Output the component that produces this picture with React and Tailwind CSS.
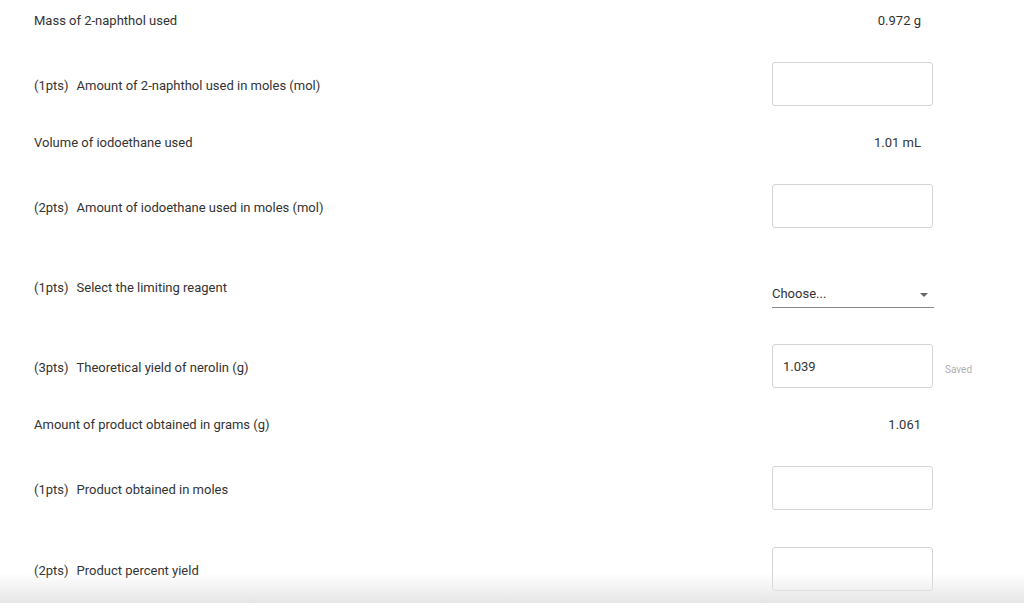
import React from "react";

function Label({ pts, children, className = "" }) {
  return (
    <div className={"flex-1 text-[13px] text-[#333] " + className}>
      {pts && <span className="mr-2">{pts}</span>}
      <span>{children}</span>
    </div>
  );
}

function ValueRow({ label, value, className }) {
  return (
    <div className={"flex items-center h-10 " + className}>
      <Label className="pt-[2px]">{label}</Label>
      <div className="w-[161px] pr-3 pt-[2px] text-right text-[13px] text-[#333]">{value}</div>
      <div className="w-[91px]" />
    </div>
  );
}

function InputRow({ pts, label, value, saved, className }) {
  return (
    <div className={"flex items-center h-11 " + className}>
      <Label pts={pts} className="pt-[3px]">{label}</Label>
      <div className="w-[161px] h-11 border border-[#d4d4d4] rounded-[3px] flex items-center px-[10px] pt-[2px] text-[13px] text-[#333] bg-white">
        {value}
      </div>
      <div className="w-[91px] pl-3 text-[10px] text-[#b0b0b0] pt-[7px]">{saved ? "Saved" : ""}</div>
    </div>
  );
}

export default function App() {
  return (
    <div
      className="relative w-[1024px] h-[603px] overflow-hidden bg-white pl-[34px]"
      style={{ fontFamily: "Roboto, 'Liberation Sans', sans-serif" }}
    >
      <ValueRow label="Mass of 2-naphthol used" value="0.972 g" className="" />
      <InputRow pts="(1pts)" label="Amount of 2-naphthol used in moles (mol)" className="mt-[22px]" />
      <ValueRow label="Volume of iodoethane used" value="1.01 mL" className="mt-4" />
      <InputRow pts="(2pts)" label="Amount of iodoethane used in moles (mol)" className="mt-[22px]" />
      <div className="flex items-center h-11 mt-9">
        <Label pts="(1pts)" className="pt-[3px]">Select the limiting reagent</Label>
        <div className="w-[162px] h-11 flex flex-col justify-end">
          <div className="flex items-center justify-between border-b border-[#8a8a8a] pb-[4px] text-[13px] text-[#333]">
            <span>Choose...</span>
            <svg width="8" height="4" viewBox="0 0 8 4" className="mr-[6px] mt-1">
              <path d="M0 0 L8 0 L4 4 Z" fill="#666" />
            </svg>
          </div>
        </div>
        <div className="w-[90px]" />
      </div>
      <InputRow pts="(3pts)" label="Theoretical yield of nerolin (g)" value="1.039" saved className="mt-9" />
      <ValueRow label="Amount of product obtained in grams (g)" value="1.061" className="mt-4" />
      <InputRow pts="(1pts)" label="Product obtained in moles" className="mt-[22px]" />
      <InputRow pts="(2pts)" label="Product percent yield" className="mt-[37px]" />
      <div className="absolute left-0 right-0 bottom-0 h-[30px] bg-gradient-to-b from-white/0 to-[#e6e6e6] pointer-events-none" />
    </div>
  );
}
